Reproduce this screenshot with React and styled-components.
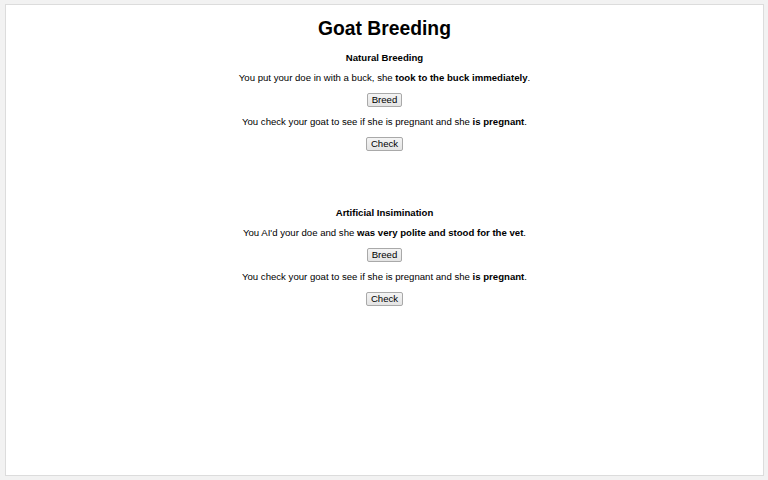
import styled, { createGlobalStyle } from "styled-components";

const GlobalStyle = createGlobalStyle`
  html, body {
    margin: 0;
    padding: 0;
    background: #f2f2f2;
  }
  body {
    font-family: "Liberation Sans", Arial, sans-serif;
    color: #000;
  }
`;

const Page = styled.div`
  box-sizing: border-box;
  height: 480px;
  padding: 4px 4px 4px 5px;
`;

const Panel = styled.main`
  box-sizing: border-box;
  height: 100%;
  background: #fff;
  border: 1px solid #dcdcdc;
  display: flex;
  flex-direction: column;
  align-items: center;
  padding-top: 12px;
`;

const Title = styled.h1`
  margin: 0 0 10px;
  font-size: 19.3px;
  line-height: 24px;
  font-weight: bold;
`;

const Section = styled.section`
  display: flex;
  flex-direction: column;
  align-items: center;
  gap: 8px;
  margin-bottom: ${({ spaced }) => (spaced ? "55px" : "0")};
`;

const SectionTitle = styled.h2`
  margin: 0 0 -2px;
  font-size: 9.6px;
  line-height: 14px;
  font-weight: bold;
`;

const Line = styled.p`
  margin: 0;
  font-size: 9.6px;
  line-height: 14px;
`;

const Button = styled.button`
  font-family: "Liberation Sans", Arial, sans-serif;
  font-size: 9.6px;
  line-height: 10px;
  height: 14px;
  padding: 1px 4px;
  color: #000;
  background: linear-gradient(#f4f4f4, #e4e4e4);
  border: 1px solid #a9a9a9;
  border-radius: 2px;
`;

const sections = [
  {
    title: "Natural Breeding",
    intro: "You put your doe in with a buck, she ",
    result: "took to the buck immediately",
  },
  {
    title: "Artificial Insimination",
    intro: "You AI'd your doe and she ",
    result: "was very polite and stood for the vet",
  },
];

const App = () => (
  <>
    <GlobalStyle />
    <Page>
      <Panel>
        <Title>Goat Breeding</Title>
        {sections.map((s, i) => (
          <Section key={s.title} spaced={i < sections.length - 1}>
            <SectionTitle>{s.title}</SectionTitle>
            <Line>
              {s.intro}
              <b>{s.result}</b>.
            </Line>
            <Button>Breed</Button>
            <Line>
              You check your goat to see if she is pregnant and she{" "}
              <b>is pregnant</b>.
            </Line>
            <Button>Check</Button>
          </Section>
        ))}
      </Panel>
    </Page>
  </>
);

export default App;
